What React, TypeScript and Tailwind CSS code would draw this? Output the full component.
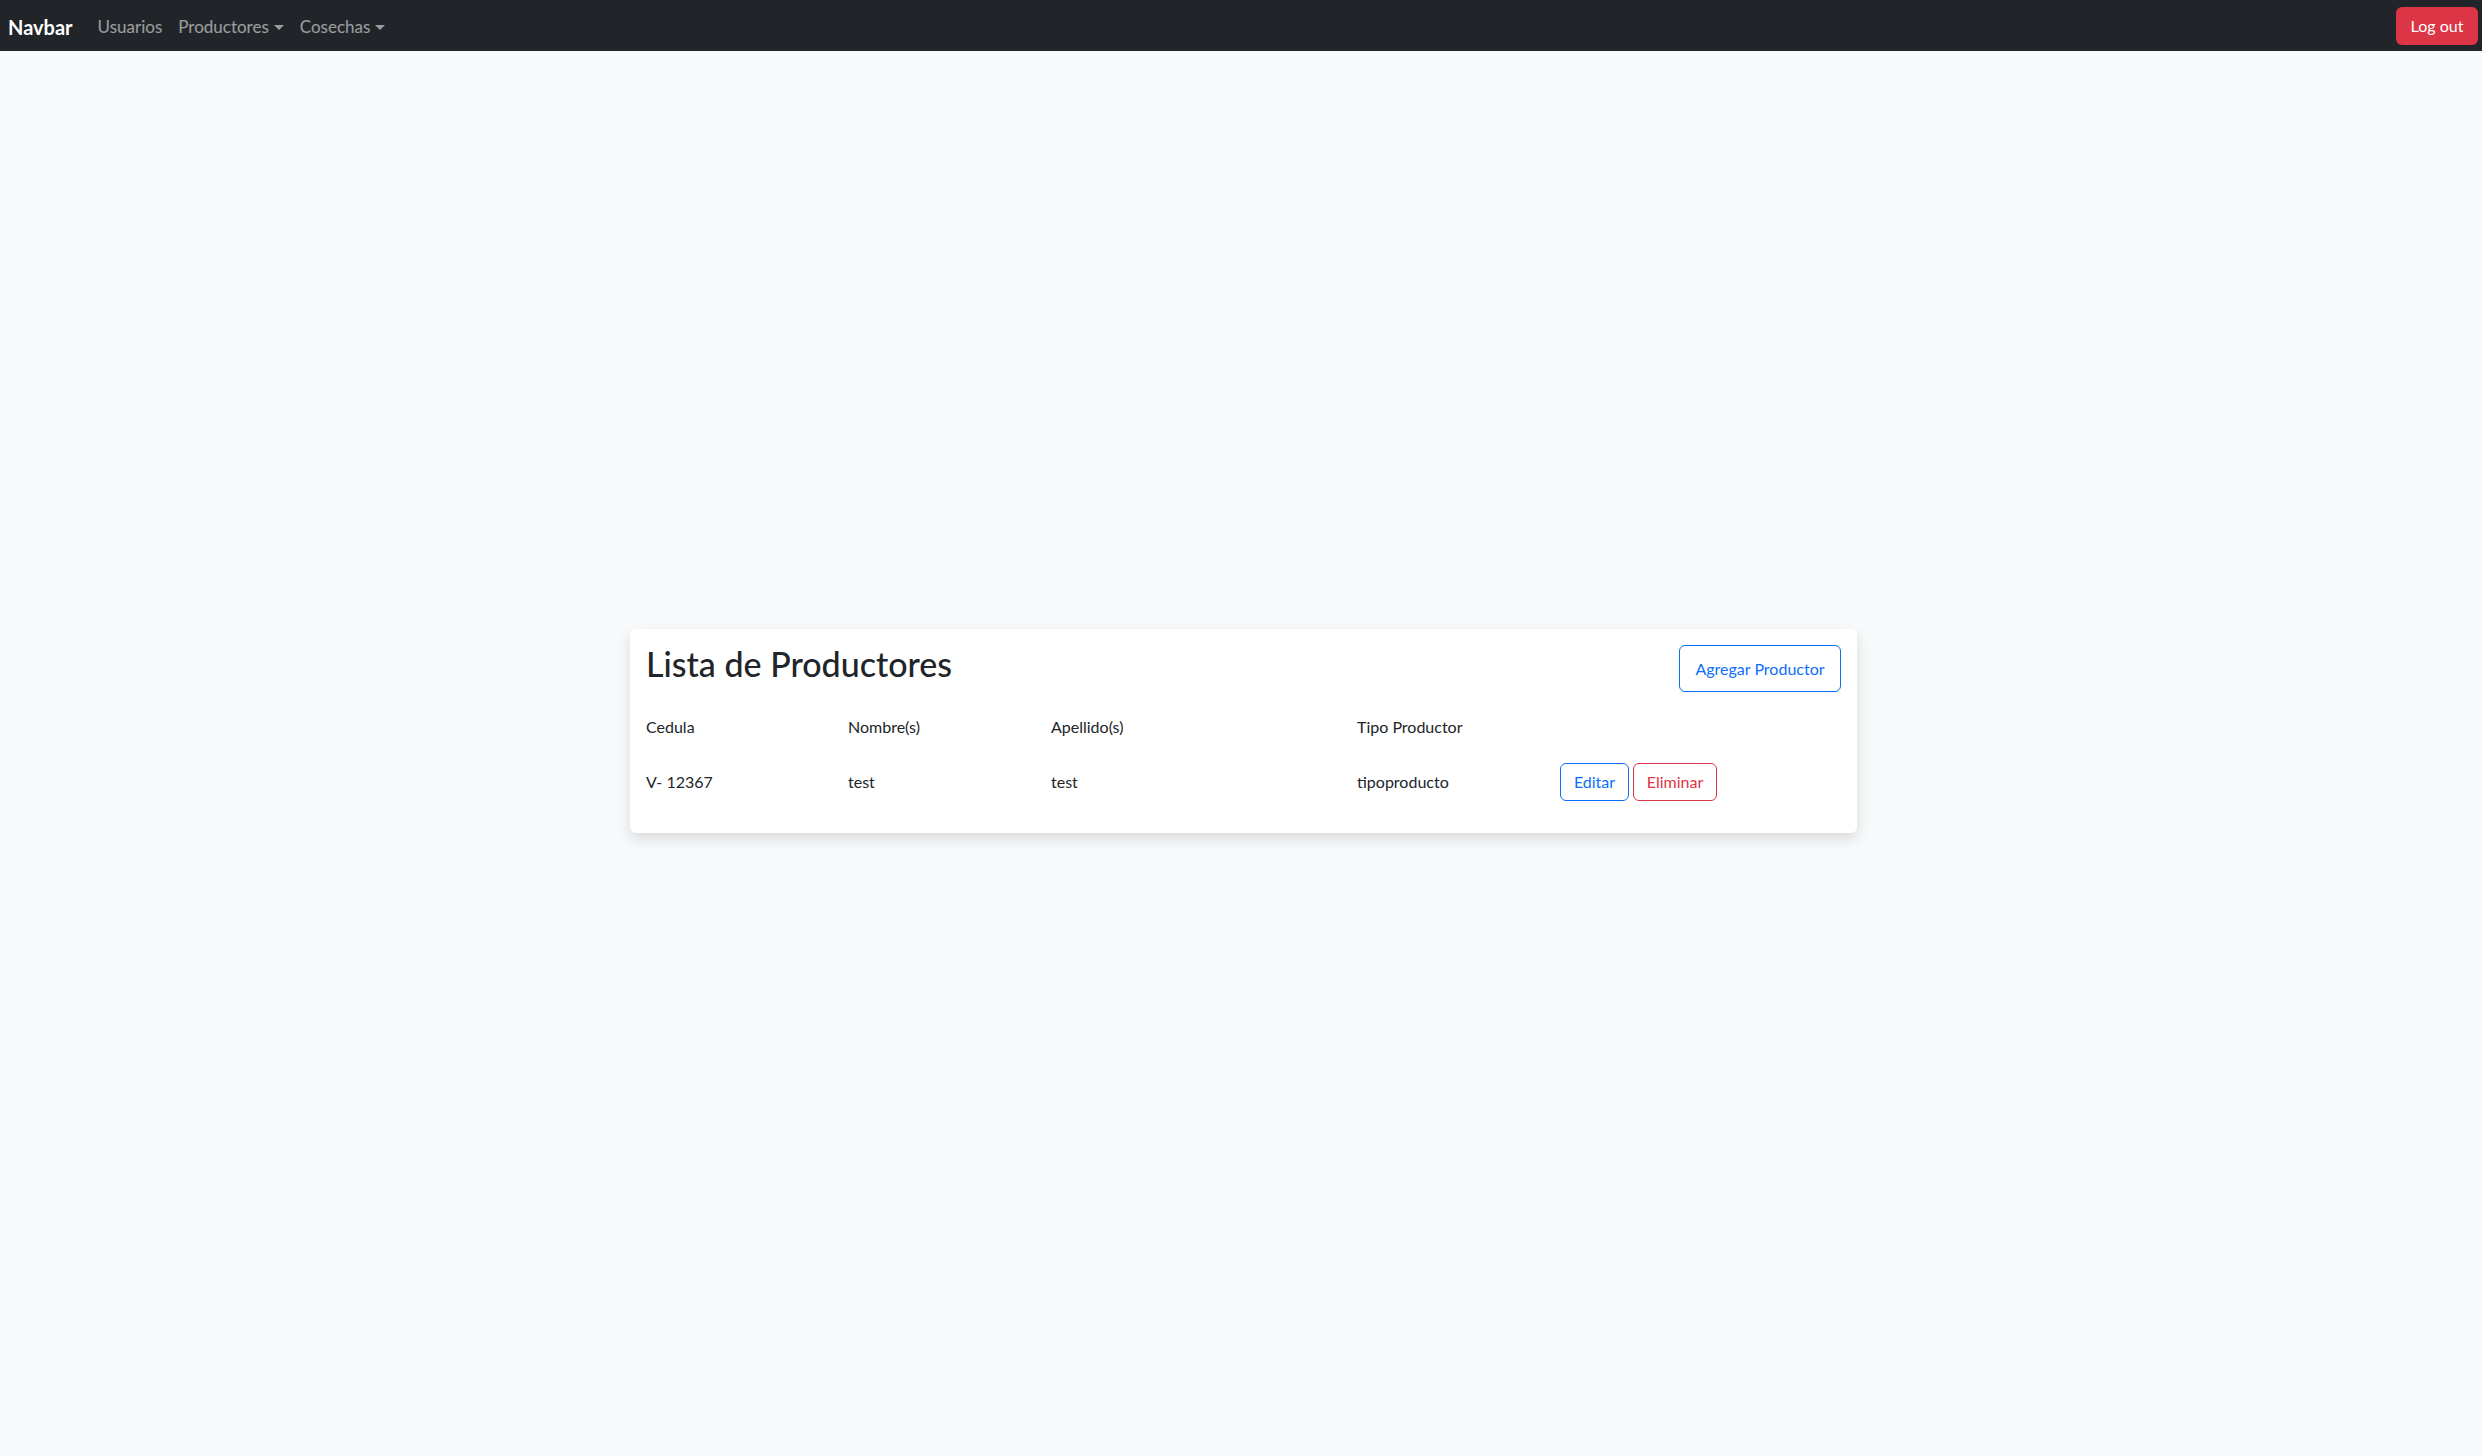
import { ReactNode } from 'react'

const FONT = "font-['Lato','Open_Sans',sans-serif]"

function Caret() {
  return (
    <span className="inline-block ml-[5px] align-[3px] w-0 h-0 border-t-[5px] border-t-current border-x-[5px] border-x-transparent" />
  )
}

function NavLink({ children, dropdown }: { children: ReactNode; dropdown?: boolean }) {
  return (
    <a className="px-2 text-[17px] leading-6 text-white/55 cursor-pointer whitespace-nowrap">
      {children}
      {dropdown && <Caret />}
    </a>
  )
}

const rows = [
  { cedula: 'V- 12367', nombre: 'test', apellido: 'test', tipo: 'tipoproducto' },
]

export default function App() {
  return (
    <div className={`${FONT} min-h-[1456px] bg-[#f8f9fa] text-[#212529]`}>
      <nav className="h-[51px] bg-[#212529] flex items-center justify-between pl-2 pr-1">
        <div className="flex items-center pt-[2px]">
          <span className="text-[20px] font-bold text-white mr-[17px] leading-none">Navbar</span>
          <div className="flex items-center">
            <NavLink>Usuarios</NavLink>
            <NavLink dropdown>Productores</NavLink>
            <NavLink dropdown>Cosechas</NavLink>
          </div>
        </div>
        <button className="h-[38px] w-[82px] rounded-md bg-[#dc3545] text-white text-[16px]">
          Log out
        </button>
      </nav>

      <main className="pt-[578px]">
        <div className="ml-[630px] w-[1227px] bg-white rounded-md shadow-[0_6px_14px_rgba(0,0,0,0.12)] p-4">
          <div className="flex items-start justify-between">
            <h2 className="text-[34px] font-medium leading-[1.2] -mt-[1px]">Lista de Productores</h2>
            <button className="h-[47px] w-[162px] rounded-md border border-[#0d6efd] text-[#0d6efd] text-[16px]">
              Agregar Productor
            </button>
          </div>

          <div className="mt-4 text-[16px]">
            <div className="grid grid-cols-[202px_203px_306px_203px_1fr] h-[38px] items-center">
              <span>Cedula</span>
              <span>Nombre(s)</span>
              <span>Apellido(s)</span>
              <span>Tipo Productor</span>
              <span />
            </div>
            {rows.map(r => (
              <div key={r.cedula} className="grid grid-cols-[202px_203px_306px_203px_1fr] h-[71px] items-center">
                <span>{r.cedula}</span>
                <span>{r.nombre}</span>
                <span>{r.apellido}</span>
                <span>{r.tipo}</span>
                <div className="flex gap-1 mt-[1px]">
                  <button className="h-[38px] w-[69px] rounded-md border border-[#0d6efd] text-[#0d6efd]">Editar</button>
                  <button className="h-[38px] w-[84px] rounded-md border border-[#dc3545] text-[#dc3545]">Eliminar</button>
                </div>
              </div>
            ))}
          </div>
        </div>
      </main>
    </div>
  )
}
